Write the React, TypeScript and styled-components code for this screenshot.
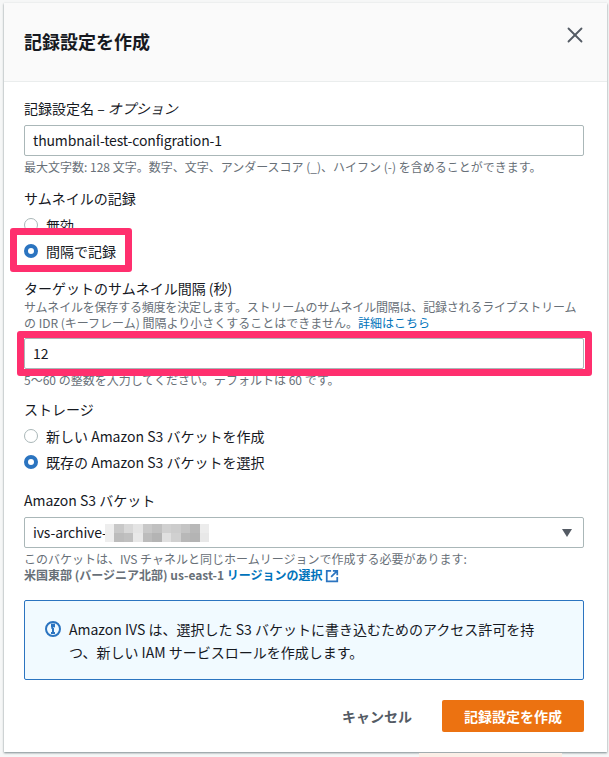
import styled, { createGlobalStyle } from "styled-components";
import { FiX } from "react-icons/fi";

const GlobalStyle = createGlobalStyle`
  html, body {
    margin: 0;
    padding: 0;
    background: #f6f7f7;
  }
  body {
    font-family: "Noto Sans CJK JP", "Noto Sans", sans-serif;
    color: #16191f;
  }
`;

const mosaic = [
  "#eeeeee", "#c8c8c8", "#d8d8d8", "#e4e4e4", "#c8c8c8", "#c0c0c0", "#d0d0d0", "#cccccc", "#c4c4c4", "#b8b8b8", "#ececec",
  "#eeeeee", "#bcbcbc", "#c0c0c0", "#e8e8e8", "#bcbcbc", "#b4b4b4", "#e0e0e0", "#d0d0d0", "#b8b8b8", "#b4b4b4", "#e8e8e8",
];

const App = () => {
  return (
    <>
      <GlobalStyle />
      <Page>
        <Modal>
          <Header>
            <Title>記録設定を作成</Title>
            <CloseIcon />
          </Header>

          <Body>
            <Field $top={16}>
              <Label $bottom={7}>
                記録設定名 – <em>オプション</em>
              </Label>
              <TextInput>thumbnail-test-configration-1</TextInput>
              <Hint>最大文字数: 128 文字。数字、文字、アンダースコア (_)、ハイフン (-) を含めることができます。</Hint>
            </Field>

            <Field $top={13}>
              <Label $bottom={6}>サムネイルの記録</Label>
              <RadioGroup>
                <RadioRow>
                  <Radio />
                  無効
                </RadioRow>
                <RadioRow>
                  <Radio $checked />
                  間隔で記録
                  <RadioHighlight />
                </RadioRow>
              </RadioGroup>
            </Field>

            <Field $top={16}>
              <Label $bottom={1}>ターゲットのサムネイル間隔 (秒)</Label>
              <Description>
                <TightLine>サムネイルを保存する頻度を決定します。ストリームのサムネイル間隔は、記録されるライブストリーム</TightLine>
                の IDR (キーフレーム) 間隔より小さくすることはできません。
                <a href="#more">詳細はこちら</a>
              </Description>
              <InputWrap>
                <TextInput>12</TextInput>
                <InputHighlight />
              </InputWrap>
              <Hint>5〜60 の整数を入力してください。デフォルトは 60 です。</Hint>
            </Field>

            <Field $top={11}>
              <Label $bottom={6}>ストレージ</Label>
              <RadioGroup>
                <RadioRow>
                  <Radio />
                  新しい Amazon S3 バケットを作成
                </RadioRow>
                <RadioRow>
                  <Radio $checked />
                  既存の Amazon S3 バケットを選択
                </RadioRow>
              </RadioGroup>
            </Field>

            <Field $top={17}>
              <Label $bottom={7}>Amazon S3 バケット</Label>
              <SelectBox>
                ivs-archive-
                <Mosaic>
                  {mosaic.map((shade, i) => (
                    <MosaicCell key={i} $shade={shade} />
                  ))}
                </Mosaic>
                <Caret />
              </SelectBox>
              <Hint>
                このバケットは、IVS チャネルと同じホームリージョンで作成する必要があります:
                <br />
                <strong>米国東部 (バージニア北部) us-east-1</strong> <a href="#region"><strong>リージョンの選択</strong></a>
                <ExternalIcon viewBox="0 0 16 16" aria-hidden="true">
                  <path d="M7 2H2v12h12V9" />
                  <path d="M9 2h5v5M14 2L7 9" />
                </ExternalIcon>
              </Hint>
            </Field>

            <InfoBox>
              <InfoIcon viewBox="0 0 16 16" aria-hidden="true">
                <circle cx="8" cy="8" r="7" />
                <path d="M8 7v5M6 12h4M6.4 7H8" />
                <path d="M7 3.6h2v1.8H7z" />
              </InfoIcon>
              <InfoText>
                Amazon IVS は、選択した S3 バケットに書き込むためのアクセス許可を持つ、新しい IAM サービスロールを作成します。
              </InfoText>
            </InfoBox>

            <Footer>
              <CancelButton>キャンセル</CancelButton>
              <PrimaryButton>記録設定を作成</PrimaryButton>
            </Footer>
          </Body>
        </Modal>
        <BackdropPatch />
      </Page>
    </>
  );
};

export default App;

const Page = styled.div`
  position: relative;
  width: 609px;
  height: 757px;
  overflow: hidden;
  padding: 3px 0 0 4px;
  box-sizing: border-box;
`;

const BackdropPatch = styled.div`
  position: absolute;
  left: 419px;
  bottom: 0;
  width: 143px;
  height: 4px;
  background: #fbeee6;
`;

const Modal = styled.div`
  width: 603px;
  height: 749px;
  background: #fff;
  box-shadow: 0 1px 2px rgba(0, 28, 36, 0.5);
`;

const Header = styled.div`
  height: 79px;
  box-sizing: border-box;
  background: #fafafa;
  border-bottom: 1px solid #eaeded;
  padding: 0 19px 0 20px;
  display: flex;
  align-items: flex-start;
  justify-content: space-between;
`;

const Title = styled.h2`
  margin: 23px 0 0;
  font-size: 18px;
  line-height: 30px;
  font-weight: 700;
`;

const CloseIcon = styled(FiX)`
  margin-top: 19px;
  width: 26px;
  height: 26px;
  color: #545b64;
  stroke-width: 1.7;
`;

const Body = styled.div`
  padding: 0 23px 0 20px;
`;

const Field = styled.div<{ $top: number }>`
  margin-top: ${(p) => p.$top}px;
`;

const Label = styled.div<{ $bottom: number }>`
  font-size: 14px;
  line-height: 20px;
  margin-bottom: ${(p) => p.$bottom}px;

  em {
    font-style: italic;
  }
`;

const TextInput = styled.div`
  height: 31px;
  box-sizing: border-box;
  border: 1px solid #aab7b8;
  border-radius: 2px;
  background: #fff;
  padding: 0 8px;
  font-size: 14px;
  line-height: 29px;
  letter-spacing: -0.14px;
`;

const Hint = styled.div`
  font-size: 12px;
  line-height: 16px;
  margin-top: 3px;
  color: #687078;

  a {
    color: #0073bb;
    text-decoration: none;
  }
`;

const Description = styled(Hint)`
  margin-top: 0;
  margin-bottom: 7px;
  white-space: nowrap;
`;

const TightLine = styled.div`
  letter-spacing: -0.2px;
`;

const RadioGroup = styled.div`
  display: flex;
  flex-direction: column;
  gap: 4px;
`;

const RadioRow = styled.div`
  position: relative;
  display: flex;
  align-items: center;
  gap: 8px;
  font-size: 14px;
  line-height: 22px;
`;

const Radio = styled.span<{ $checked?: boolean }>`
  width: 14px;
  height: 14px;
  box-sizing: border-box;
  border-radius: 50%;
  background: #fff;
  border: ${(p) => (p.$checked ? "4px solid #2b74c0" : "1px solid #aab7b8")};
`;

const RadioHighlight = styled.span`
  position: absolute;
  left: -14px;
  top: -12px;
  width: 122px;
  height: 44px;
  box-sizing: border-box;
  border: 7px solid #ff2f6e;
  border-radius: 3px;
`;

const InputWrap = styled.div`
  position: relative;
`;

const InputHighlight = styled.span`
  position: absolute;
  left: -7px;
  right: -8px;
  top: -7px;
  bottom: -7px;
  border: 7px solid #ff2f6e;
  border-radius: 3px;
`;

const SelectBox = styled(TextInput)`
  display: flex;
  align-items: center;
  position: relative;
`;

const Mosaic = styled.div`
  display: grid;
  margin-left: -2px;
  grid-template-columns: repeat(11, 9.5px);
  grid-auto-rows: 9px;
`;

const MosaicCell = styled.span<{ $shade: string }>`
  background: ${(p) => p.$shade};
`;

const Caret = styled.span`
  position: absolute;
  right: 11px;
  top: 11px;
  border-left: 5.5px solid transparent;
  border-right: 5.5px solid transparent;
  border-top: 8px solid #545b64;
`;

const ExternalIcon = styled.svg`
  width: 14px;
  height: 14px;
  margin-left: 2px;
  vertical-align: -3px;
  fill: none;
  stroke: #2b74c0;
  stroke-width: 2;
`;

const InfoBox = styled.div`
  margin-top: 17px;
  height: 80px;
  box-sizing: border-box;
  border: 1px solid #2b74c0;
  border-radius: 2px;
  background: #f1faff;
  padding: 17px 40px 0 20px;
  display: flex;
  gap: 8px;
`;

const InfoIcon = styled.svg`
  flex: none;
  width: 16px;
  height: 16px;
  margin-top: 3px;
  fill: none;
  stroke: #2b74c0;
  stroke-width: 2;
`;

const InfoText = styled.div`
  font-size: 14px;
  line-height: 23px;
`;

const Footer = styled.div`
  display: flex;
  justify-content: flex-end;
  align-items: center;
  gap: 30px;
  margin-top: 20px;
`;

const CancelButton = styled.span`
  font-size: 14px;
  font-weight: 700;
  color: #545b64;
`;

const PrimaryButton = styled.span`
  height: 32px;
  width: 142px;
  display: flex;
  align-items: center;
  justify-content: center;
  background: #ec7211;
  border-radius: 2px;
  color: #fff;
  font-size: 14px;
  font-weight: 700;
`;
